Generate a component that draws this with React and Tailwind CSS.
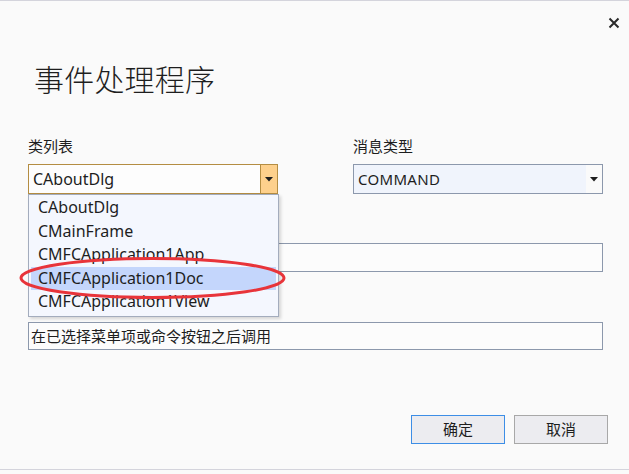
import { useState } from 'react'

const font = { fontFamily: '"Noto Sans", "Noto Sans CJK SC", sans-serif' }

function Arrow({ className }) {
  return (
    <svg width="8" height="5" viewBox="0 0 8 5" className={className}>
      <path d="M0 0 H8 L4 4.5 Z" fill="#1e1e1e" />
    </svg>
  )
}

export default function App() {
  const [classes] = useState([
    'CAboutDlg',
    'CMainFrame',
    'CMFCApplication1App',
    'CMFCApplication1Doc',
    'CMFCApplication1View'
  ])
  const selected = 'CMFCApplication1Doc'

  return (
    <div
      className="w-[629px] h-[474px] bg-[#fafafa] text-[#1e1e1e] flex flex-col"
      style={font}
    >
      <div className="h-[470px] border-t border-b border-[#d4d4dc] flex flex-col relative">
        {/* close */}
        <div className="flex justify-end pr-[9px] pt-[16px]">
          <svg width="12" height="12" viewBox="0 0 12 12">
            <path d="M1.5 1.5 L10.5 10.5 M10.5 1.5 L1.5 10.5" stroke="#2a2a2a" strokeWidth="2" />
          </svg>
        </div>

        <h1 className="pl-[34px] mt-[33px] text-[30px] leading-[36px] font-light tracking-[0.2px]">
          事件处理程序
        </h1>

        <div className="pl-[28px] pr-[26px] mt-[38px] flex flex-col">
          {/* row 1 */}
          <div className="flex gap-[75px]">
            <div className="w-[250px] flex flex-col">
              <label className="text-[15px] leading-[20px]">类列表</label>
              <div className="mt-[8px] h-[30px] flex border border-[#b48d42] bg-[#fdfdfd]">
                <div className="flex-1 pl-[4px] text-[16px] leading-[28px]">CAboutDlg</div>
                <div className="w-[17px] border-l border-[#b48d42] bg-[#fdd08c] flex items-center justify-center">
                  <Arrow />
                </div>
              </div>
            </div>
            <div className="w-[250px] flex flex-col">
              <label className="text-[15px] leading-[20px]">消息类型</label>
              <div className="mt-[8px] h-[30px] flex border border-[#8c98ac] bg-[#fafafa]">
                <div className="flex-1 bg-[#f0f4fc] pl-[4px] text-[15px] leading-[28px] tracking-[0.3px]">COMMAND</div>
                <div className="w-[16px] flex items-center justify-center">
                  <Arrow />
                </div>
              </div>
            </div>
          </div>

          {/* row 2 */}
          <div className="mt-[49px] h-[29px] border border-[#8c98ac] bg-[#fcfcfc]" />

          {/* row 3 */}
          <div className="mt-[50px] h-[28px] border border-[#8c98ac] bg-[#fcfcfc] pl-[2px] text-[15px] leading-[26px]">
            在已选择菜单项或命令按钮之后调用
          </div>
        </div>

        <div className="mt-auto mb-[25px] pr-[21px] flex justify-end gap-[9px]">
          <button className="w-[94px] h-[29px] border border-[#3d8ee6] bg-[#ececf0] text-[15px]">确定</button>
          <button className="w-[94px] h-[29px] border border-[#a8a8a8] bg-[#ececf0] text-[15px]">取消</button>
        </div>

        {/* open dropdown list */}
        <div className="absolute left-[28px] top-[193px] w-[251px] pt-[1px] pb-[2px] px-[2px] border border-[#a3acbd] bg-[#f4f7fe] shadow-[2px_2px_3px_rgba(0,0,0,0.15)]">
          {classes.map((c) => (
            <div
              key={c}
              className={`h-[23.5px] pl-[7px] text-[16px] leading-[23.5px] ${c === selected ? 'bg-[#c4d6fc]' : ''}`}
            >
              {c}
            </div>
          ))}
        </div>

        {/* red annotation */}
        <svg className="absolute left-[18px] top-[254px]" width="270" height="46" viewBox="0 0 270 46">
          <ellipse cx="134.5" cy="23" rx="131.5" ry="19.5" fill="none" stroke="#e8343a" strokeWidth="3" />
        </svg>
      </div>
    </div>
  )
}
